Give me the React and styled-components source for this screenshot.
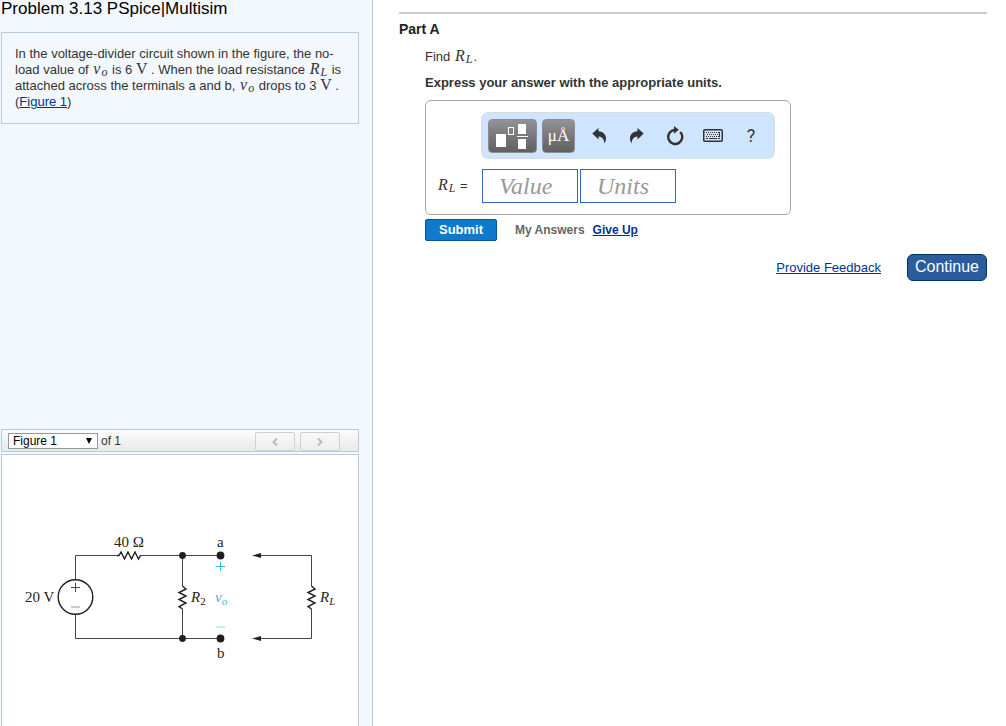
import React, { useState } from 'react'
import styled, { createGlobalStyle } from 'styled-components'

const SANS = '"Liberation Sans", Arial, sans-serif'
const SERIF = '"Liberation Serif", "Times New Roman", serif'

const LINE_COLOR = '#b8cbdf'
const LINK_COLOR = '#003399'
const TEXT_COLOR = '#333333'

const GlobalStyle = createGlobalStyle`
  *, *::before, *::after {
    box-sizing: border-box;
  }

  body {
    margin: 0;
    background: white;
    color: ${TEXT_COLOR};
    font: 13px/16px ${SANS};
  }
`

const Page = styled.div`
  display: grid;
  grid-template-columns: 373px 1fr;
  min-height: 100vh;
`

const Sidebar = styled.aside`
  display: flex;
  flex-direction: column;
  padding: 0 13px 0 1px;
  background: #f3f8ff;
  border-right: 1px solid ${LINE_COLOR};
`

const ProblemTitle = styled.h1`
  margin: 0 0 14px;
  color: black;
  font-size: 17px;
  font-weight: normal;
  line-height: 18px;
`

const Intro = styled.p`
  margin: 0;
  padding: 13px 15px 13px 13px;
  border: 1px solid ${LINE_COLOR};
`

const Link = styled.a`
  color: ${LINK_COLOR};
  font-weight: ${props => (props.$bold ? 'bold' : 'normal')};
  font-size: ${props => (props.$bold ? '12px' : '13px')};
`

const Variable = styled.i`
  margin: 0 1px;
  font-family: ${SERIF};
  font-size: 16px;
  line-height: 1px;

  sub {
    margin-left: 1px;
    font-size: 12px;
    line-height: 1px;
    vertical-align: -2px;
  }
`

const Unit = styled.span`
  font-family: ${SERIF};
  font-size: 16px;
  line-height: 1px;
`

const Viewer = styled.section`
  margin-top: auto;
`

const ViewerBar = styled.div`
  display: flex;
  align-items: center;
  height: 23px;
  margin-bottom: 2px;
  padding: 0 18px 0 6px;
  border: 1px solid ${LINE_COLOR};
  background: linear-gradient(#fcfcfc, #e9e9e9);
  font-size: 12px;
`

const SelectWrap = styled.div`
  position: relative;
  margin-right: 3px;

  &::after {
    content: '';
    position: absolute;
    top: 5px;
    right: 6px;
    border: 3px solid transparent;
    border-top: 6px solid black;
    border-bottom: 0;
    pointer-events: none;
  }
`

const FigureSelect = styled.select`
  display: block;
  width: 90px;
  height: 16px;
  padding: 0 4px;
  appearance: none;
  border: 1px solid #999999;
  border-radius: 0;
  background: white;
  color: black;
  font: 12px/14px ${SANS};
`

const Pager = styled.div`
  display: flex;
  gap: 5px;
  margin-left: auto;
  padding-top: 2px;
`

const PagerButton = styled.button`
  display: flex;
  align-items: center;
  justify-content: center;
  width: 40px;
  height: 19px;
  padding: 0;
  border: 1px solid #d0d0d0;
  border-radius: 2px;
  background: linear-gradient(#f8f8f8, #ededed);
`

const FigureBox = styled.div`
  min-height: 272px;
  border: 1px solid ${LINE_COLOR};
  border-bottom: 0;
  background: white;

  svg {
    display: block;
    font-family: ${SERIF};
    font-size: 15px;
  }
`

const Main = styled.main`
  padding: 12px 19px 0 26px;
`

const Part = styled.section`
  border-top: 2px solid #cccccc;
  padding-top: 7px;
`

const PartTitle = styled.h2`
  margin: 0;
  color: #222222;
  font-size: 14px;
  line-height: 16px;
`

const PartBody = styled.div`
  padding-left: 26px;
`

const Prompt = styled.p`
  margin: 12px 0 10px;
`

const Instruction = styled.p`
  margin: 0 0 9px;
  font-weight: bold;
`

const AnswerBox = styled.div`
  width: 366px;
  max-width: 100%;
  padding: 11px 15px 11px 11px;
  border: 1px solid #a6a6a6;
  border-radius: 6px;
`

const Toolbar = styled.div`
  display: flex;
  align-items: center;
  height: 47px;
  margin: 0 0 10px 44px;
  padding-left: 6px;
  border: 1px solid #d6dde6;
  border-radius: 7px;
  background: #cfe5ff;
`

const TemplateButton = styled.button`
  display: flex;
  align-items: center;
  justify-content: center;
  width: ${props => (props.$wide ? '49px' : '33px')};
  height: 34px;
  margin-right: 5px;
  padding: 0;
  border: 1px solid #8c8c92;
  border-radius: 4px;
  background: linear-gradient(#929298, #606060);
  color: white;
  font: 17px/20px ${SERIF};
`

const ToolButton = styled.button`
  display: flex;
  align-items: center;
  justify-content: center;
  width: 38px;
  height: 34px;
  padding: 0;
  border: 0;
  background: none;
  color: #333333;
  font: 18px/20px Roboto, sans-serif;
`

const AnswerRow = styled.div`
  display: flex;
  align-items: center;
  gap: 2px;
`

const AnswerLabel = styled.label`
  width: 43px;
  white-space: nowrap;
`

const AnswerInput = styled.input`
  width: 96px;
  height: 34px;
  padding: 0 16px;
  border: 1px solid #3366cc;
  background: white;
  color: ${TEXT_COLOR};
  font: italic 24px/28px ${SERIF};

  &::placeholder {
    color: #999999;
    opacity: 1;
  }
`

const Actions = styled.div`
  display: flex;
  align-items: center;
  margin-top: 4px;
`

const SubmitButton = styled.button`
  width: 72px;
  height: 22px;
  margin-right: 18px;
  padding: 0;
  border: 1px solid #0b5394;
  border-radius: 2px;
  background: #0f7acb;
  color: white;
  font: bold 13px/16px ${SANS};
`

const MyAnswers = styled.span`
  margin-right: 8px;
  color: #666666;
  font-size: 12px;
  font-weight: bold;
`

const Footer = styled.footer`
  display: flex;
  align-items: center;
  justify-content: flex-end;
  gap: 26px;
  margin-top: 13px;
`

const ContinueButton = styled.button`
  width: 80px;
  height: 27px;
  padding: 0 0 2px;
  border: 1px solid #003366;
  border-radius: 6px;
  background: #2b5c9e;
  color: white;
  font: 16px/20px ${SANS};
`

const LoadR = () => <Variable>R<sub>L</sub></Variable>
const OutV = () => <Variable>v<sub>o</sub></Variable>

const Chevron = ({ d }) => (
  <svg width='8' height='8' viewBox='0 0 8 8' fill='none' stroke='#bbbbbb' strokeWidth='2'>
    <path d={d} />
  </svg>
)

const TemplateIcon = () => (
  <svg width='33' height='26' viewBox='0 0 33 26'>
    <path fill='white' d='M0 11h10v13H0zM22 1h8v10h-8zM22 16h8v10h-8zM21 13h11v1H21z' />
    <rect x='12.5' y='4.5' width='5' height='7' fill='none' stroke='white' />
  </svg>
)

const UndoIcon = () => (
  <svg width='14' height='16' viewBox='0 0 14 16' fill='#333333'>
    <path d='M0.3 5.5L6.5 0V3.2C11.2 3.4 14 6.5 14 10.3C14 12.3 13.4 14 12.3 15.4C12.3 11 10.2 8.6 6.5 8.4V11.4Z' />
  </svg>
)

const RedoIcon = () => (
  <svg width='14' height='16' viewBox='0 0 14 16' fill='#333333'>
    <path d='M13.7 5.5L7.5 0V3.2C2.8 3.4 0 6.5 0 10.3C0 12.3 0.6 14 1.7 15.4C1.7 11 3.8 8.6 7.5 8.4V11.4Z' />
  </svg>
)

const ResetIcon = () => (
  <svg width='18' height='20' viewBox='0 0 18 20'>
    <path d='M14.2 6A7 7 0 1 1 8.5 4' fill='none' stroke='#333333' strokeWidth='2.4' />
    <path d='M8 0L12.8 3.8L8 7.8Z' fill='#333333' />
  </svg>
)

const KeyboardIcon = () => (
  <svg width='20' height='13' viewBox='0 0 20 13' fill='none' stroke='#333333'>
    <rect x='0.75' y='0.75' width='18.5' height='11.5' rx='1' strokeWidth='1.5' />
    <path d='M3 3.5h14M4 5.5h13M3 7.5h14' strokeDasharray='1 1' />
    <path d='M3 9.5h2M6 9.5h8M15 9.5h2M16.5 3v5' />
  </svg>
)

const Circuit = () => (
  <svg width='356' height='271' viewBox='0 0 356 271' role='img' aria-label='Voltage-divider circuit'>
    <g fill='none' stroke='#444444'>
      <path d='M73.5 124.5V100.5H115.5M138 100.5H218.5' />
      <path d='M73.5 159.5V183.5H218.5' />
      <path d='M180.5 100.5V131M180.5 154V183.5' />
      <path d='M256 100.5H309.5V131M309.5 154V183.5H256' />
    </g>
    <g fill='none' stroke='#231f20' strokeWidth='1.4' strokeLinejoin='miter'>
      <circle cx='73.5' cy='142' r='17.3' />
      <path d='M115 100.5L117 100.5L119 97L122.5 104L126 97L129.5 104L133 97L136.5 104L138.5 100.5' />
      <path d='M180.5 131L184 134L177 137.5L184 141L177 144.5L184 148L177 151.5L180.5 154' />
      <path d='M309.5 131L313 134L306 137.5L313 141L306 144.5L313 148L306 151.5L309.5 154' />
    </g>
    <g fill='#231f20'>
      <circle cx='180.5' cy='100.5' r='3.4' />
      <circle cx='218.5' cy='100.5' r='3.9' />
      <circle cx='180.5' cy='183.5' r='3.4' />
      <circle cx='218.5' cy='183.5' r='3.9' />
      <path d='M250 100.5L259 98V103ZM250 183.5L259 181V186Z' />
    </g>
    <path d='M69 132.5H78M73.5 128V137' stroke='#444444' />
    <path d='M69 152H78' stroke='#999999' />
    <path d='M214 111.5H223M218.5 107V116' stroke='#35b5e5' />
    <path d='M214 172H223' stroke='#8fd3f0' />
    <g fill='#231f20'>
      <text x='112' y='92'>40 Ω</text>
      <text x='23' y='147'>20 V</text>
      <text x='215' y='92'>a</text>
      <text x='215' y='203'>b</text>
      <text x='189' y='147' fontStyle='italic'>R<tspan fontStyle='normal' fontSize='11' dy='3'>2</tspan></text>
      <text x='318' y='147' fontStyle='italic'>R<tspan fontSize='11' dy='3'>L</tspan></text>
    </g>
    <text x='213' y='147' fill='#35b5e5' fontStyle='italic'>v<tspan fontSize='11' dy='3'>o</tspan></text>
  </svg>
)

export default function App () {
  const [value, setValue] = useState('')
  const [units, setUnits] = useState('')

  return (
    <>
      <GlobalStyle />
      <Page>
        <Sidebar>
          <ProblemTitle>Problem 3.13 PSpice|Multisim</ProblemTitle>
          <Intro>
            In the voltage-divider circuit shown in the figure, the no-load value
            of <OutV /> is 6 <Unit>V</Unit> . When the load resistance <LoadR /> is
            attached across the terminals a and b, <OutV /> drops to 3 <Unit>V</Unit> .
            (<Link href='#figure'>Figure 1</Link>)
          </Intro>
          <Viewer id='figure'>
            <ViewerBar>
              <SelectWrap>
                <FigureSelect aria-label='Figure'>
                  <option>Figure 1</option>
                </FigureSelect>
              </SelectWrap>
              of 1
              <Pager>
                <PagerButton aria-label='Previous figure' disabled><Chevron d='M6 0.5L2.5 4L6 7.5' /></PagerButton>
                <PagerButton aria-label='Next figure' disabled><Chevron d='M2 0.5L5.5 4L2 7.5' /></PagerButton>
              </Pager>
            </ViewerBar>
            <FigureBox><Circuit /></FigureBox>
          </Viewer>
        </Sidebar>
        <Main>
          <Part>
            <PartTitle>Part A</PartTitle>
            <PartBody>
              <Prompt>Find <LoadR />.</Prompt>
              <Instruction>Express your answer with the appropriate units.</Instruction>
              <AnswerBox>
                <Toolbar>
                  <TemplateButton $wide aria-label='Templates'><TemplateIcon /></TemplateButton>
                  <TemplateButton aria-label='Units'>μÅ</TemplateButton>
                  <ToolButton aria-label='Undo'><UndoIcon /></ToolButton>
                  <ToolButton aria-label='Redo'><RedoIcon /></ToolButton>
                  <ToolButton aria-label='Reset'><ResetIcon /></ToolButton>
                  <ToolButton aria-label='Keyboard'><KeyboardIcon /></ToolButton>
                  <ToolButton aria-label='Help'>?</ToolButton>
                </Toolbar>
                <AnswerRow>
                  <AnswerLabel htmlFor='value'><LoadR /> =</AnswerLabel>
                  <AnswerInput id='value' placeholder='Value' value={value} onChange={e => setValue(e.target.value)} />
                  <AnswerInput aria-label='Units' placeholder='Units' value={units} onChange={e => setUnits(e.target.value)} />
                </AnswerRow>
              </AnswerBox>
              <Actions>
                <SubmitButton>Submit</SubmitButton>
                <MyAnswers>My Answers</MyAnswers>
                <Link href='#give-up' $bold>Give Up</Link>
              </Actions>
            </PartBody>
          </Part>
          <Footer>
            <Link href='#feedback'>Provide Feedback</Link>
            <ContinueButton>Continue</ContinueButton>
          </Footer>
        </Main>
      </Page>
    </>
  )
}
